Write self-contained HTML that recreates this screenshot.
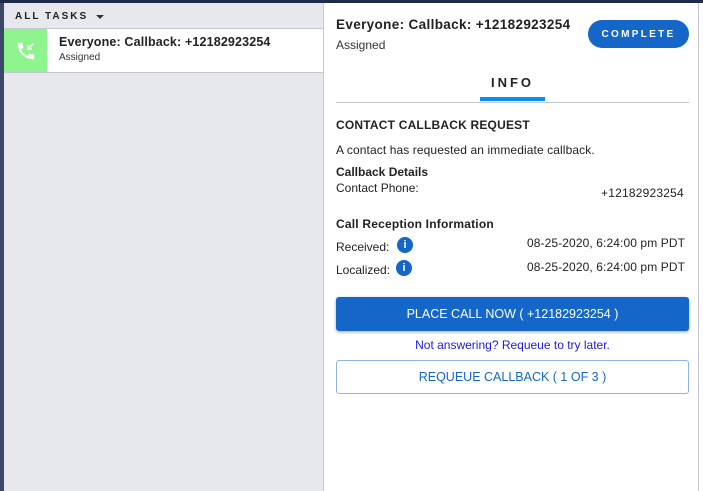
<!DOCTYPE html><html><head><style>
*{margin:0;padding:0;box-sizing:border-box}
body{width:703px;height:491px;overflow:hidden;background:#fff;font-family:"Liberation Sans",sans-serif;position:relative;color:#222}
.abs{position:absolute}
</style></head><body>
<div class="abs" style="left:0;top:0;width:703px;height:3px;background:#1e2b4a"></div>
<div class="abs" style="left:0;top:3px;width:4px;height:488px;background:#3b4868"></div>
<div class="abs" style="left:4px;top:3px;width:319px;height:488px;background:#e7e8ed"></div>
<div class="abs" style="left:323px;top:3px;width:1px;height:488px;background:#c4c7d2"></div>
<div class="abs" style="left:698px;top:3px;width:1px;height:488px;background:#c4c7d2"></div>
<div class="abs" style="left:15px;top:11px;font-size:10px;font-weight:bold;letter-spacing:2px;color:#222">ALL TASKS</div>
<div class="abs" style="left:96px;top:15px;width:0;height:0;border-left:4px solid transparent;border-right:4px solid transparent;border-top:4px solid #333"></div>
<div class="abs" style="left:4px;top:28px;width:319px;height:1px;background:#c4c7d2"></div>
<div class="abs" style="left:4px;top:29px;width:319px;height:44px;background:#fff;border-bottom:1px solid #c4c7d2"></div>
<div class="abs" style="left:4px;top:29px;width:43px;height:43px;background:#8ef58e"></div>
<svg class="abs" style="left:15px;top:40px" width="22" height="22" viewBox="0 0 24 24"><path fill="#fff" d="M6.6 10.8c1.4 2.8 3.8 5.1 6.6 6.6l2.2-2.2c.3-.3.7-.4 1-.2 1.1.4 2.3.6 3.6.6.6 0 1 .4 1 1V20c0 .6-.4 1-1 1C10.6 21 3 13.4 3 4c0-.6.4-1 1-1h3.5c.6 0 1 .4 1 1 0 1.3.2 2.5.6 3.6.1.3 0 .7-.2 1z"/><path stroke="#fff" stroke-width="1.6" fill="none" d="M20 4l-6 6M14 5.5V10h4.5"/></svg>
<div class="abs" style="left:59px;top:35px;font-size:12.5px;font-weight:bold;letter-spacing:0.15px">Everyone: Callback: +12182923254</div>
<div class="abs" style="left:59px;top:52px;font-size:10px;color:#333">Assigned</div>
<div class="abs" style="left:336px;top:17px;font-size:13.5px;font-weight:bold;letter-spacing:0.35px">Everyone: Callback: +12182923254</div>
<div class="abs" style="left:336px;top:38px;font-size:12px;color:#333">Assigned</div>
<div class="abs" style="left:588px;top:20px;width:101px;height:28px;border-radius:14px;background:#1467c8;color:#fff;font-size:10px;font-weight:bold;letter-spacing:2.3px;text-align:center;line-height:29px">COMPLETE</div>
<div class="abs" style="left:480px;top:75px;width:65px;text-align:center;font-size:13px;font-weight:bold;letter-spacing:3px">INFO</div>
<div class="abs" style="left:336px;top:102px;width:353px;height:1px;background:#c4c7d2"></div>
<div class="abs" style="left:480px;top:97px;width:65px;height:4px;background:#0a8fef"></div>
<div class="abs" style="left:336px;top:118px;font-size:12px;font-weight:bold;letter-spacing:0.2px">CONTACT CALLBACK REQUEST</div>
<div class="abs" style="left:336px;top:143px;font-size:12px;letter-spacing:0.1px">A contact has requested an immediate callback.</div>
<div class="abs" style="left:336px;top:165px;font-size:12px;font-weight:bold">Callback Details</div>
<div class="abs" style="left:336px;top:181px;font-size:12px">Contact Phone:</div>
<div class="abs" style="left:601px;top:186px;font-size:12px;letter-spacing:0.2px">+12182923254</div>
<div class="abs" style="left:336px;top:217px;font-size:12px;font-weight:bold;letter-spacing:0.2px">Call Reception Information</div>
<div class="abs" style="left:336px;top:240px;font-size:12px">Received:</div>
<div class="abs" style="left:397px;top:237px;width:16px;height:16px;border-radius:50%;background:#1467c8;color:#fff;font-size:11px;font-weight:bold;text-align:center;line-height:16px">i</div>
<div class="abs" style="left:527px;top:236px;font-size:12px;letter-spacing:0.1px">08-25-2020, 6:24:00 pm PDT</div>
<div class="abs" style="left:336px;top:263px;font-size:12px">Localized:</div>
<div class="abs" style="left:396px;top:260px;width:16px;height:16px;border-radius:50%;background:#1467c8;color:#fff;font-size:11px;font-weight:bold;text-align:center;line-height:16px">i</div>
<div class="abs" style="left:527px;top:260px;font-size:12px;letter-spacing:0.1px">08-25-2020, 6:24:00 pm PDT</div>
<div class="abs" style="left:336px;top:297px;width:353px;height:34px;border-radius:3px;background:#1467c8;color:#fff;font-size:12.5px;text-align:center;line-height:34px;box-shadow:0 1px 3px rgba(0,0,0,.35)">PLACE CALL NOW ( +12182923254 )</div>
<div class="abs" style="left:336px;top:338px;width:353px;text-align:center;font-size:12px;color:#1a1ae6">Not answering? Requeue to try later.</div>
<div class="abs" style="left:336px;top:360px;width:353px;height:34px;border-radius:3px;border:1px solid #8fb4e4;color:#1467c8;font-size:12.5px;text-align:center;line-height:32px">REQUEUE CALLBACK ( 1 OF 3 )</div>
</body></html>
